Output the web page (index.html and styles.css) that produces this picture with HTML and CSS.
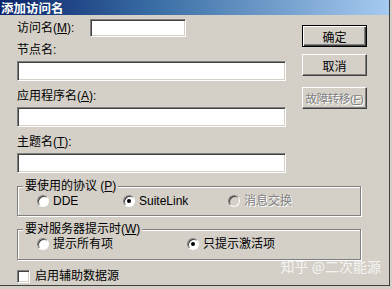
FILE: index.html
```html
<!DOCTYPE html>
<html lang="zh-CN">
<head>
    <meta charset="UTF-8">
    <title>添加访问名</title>
    <link rel="stylesheet" href="styles.css">
</head>
<body>
    <div class="window">
        <!-- Title bar -->
        <div class="titlebar"><span class="title">添加访问名</span></div>

        <div class="dialog">
            <div class="top">
                <!-- Text fields -->
                <div class="fields">
                    <div class="access-row">
                        <span class="access-label">访问名(<u>M</u>):</span>
                        <div class="edit edit-short"></div>
                    </div>
                    <div class="label label-first">节点名:</div>
                    <div class="edit"></div>
                    <div class="label">应用程序名(<u>A</u>):</div>
                    <div class="edit"></div>
                    <div class="label">主题名(<u>T</u>):</div>
                    <div class="edit"></div>
                </div>

                <!-- Buttons -->
                <div class="buttons">
                    <button class="btn btn-default">确定</button>
                    <button class="btn">取消</button>
                    <button class="btn btn-disabled">故障转移(<u>F</u>)</button>
                </div>
            </div>

            <fieldset class="group">
                <legend>要使用的协议 (<u>P</u>)</legend>
                <div class="options">
                    <label class="opt opt-dde"><span class="radio"></span>DDE</label>
                    <label class="opt opt-suite"><span class="radio checked"></span>SuiteLink</label>
                    <label class="opt disabled"><span class="radio"></span>消息交换</label>
                </div>
            </fieldset>

            <fieldset class="group group-second">
                <legend>要对服务器提示时(<u>W</u>)</legend>
                <div class="options">
                    <label class="opt opt-all"><span class="radio"></span>提示所有项</label>
                    <label class="opt"><span class="radio checked"></span>只提示激活项</label>
                </div>
            </fieldset>

            <label class="check-row"><span class="checkbox"></span>启用辅助数据源</label>
        </div>

        <div class="watermark">知乎 @二次能源</div>
    </div>
</body>
</html>
```

FILE: styles.css
```css
/* General Reset */
body, html {
    margin: 0;
    padding: 0;
    background-color: #d4d0c8;
    font-family: 'Liberation Sans', 'Noto Sans CJK SC', sans-serif;
    font-size: 12px;
    color: #000;
}

u {
    text-decoration: underline;
    text-underline-offset: 1px;
}

/* Window frame */
.window {
    position: relative;
    width: 389px;
    height: 285px;
    border-right: 1px solid #404040;
    border-bottom: 1px solid #404040;
    background: #d4d0c8;
}

.titlebar {
    display: flex;
    align-items: center;
    height: 15px;
    padding-left: 1px;
    background: linear-gradient(to right, #0a246a, #3a6ea5 40%, #a6caf0);
}

.title {
    line-height: 12px;
    padding-top: 1px;
    color: #fff;
    font-weight: bold;
    font-size: 12.5px;
    font-family: 'Noto Sans CJK SC', sans-serif;
}

.dialog {
    padding: 4px 0 0 17px;
}

.top {
    display: flex;
}

/* Text fields */
.fields {
    width: 269px;
}

.access-row {
    display: flex;
    align-items: center;
    height: 18px;
}

.access-label {
    width: 73px;
    line-height: 14px;
}

.label {
    margin-top: 8px;
    line-height: 14px;
    height: 14px;
}

.label-first {
    margin-top: 6px;
}

.edit {
    box-sizing: border-box;
    width: 269px;
    height: 20px;
    margin-top: 4px;
    background: #fff;
    border: 1px solid;
    border-color: #808080 #fff #fff #808080;
    box-shadow: inset 1px 1px 0 #404040, inset -1px -1px 0 #d4d0c8;
}

.edit-short {
    width: 96px;
    height: 18px;
    margin-top: 0;
}

/* Buttons */
.buttons {
    display: flex;
    flex-direction: column;
    margin-left: 16px;
    padding-top: 6px;
}

.btn {
    box-sizing: border-box;
    width: 65px;
    height: 22px;
    padding: 0;
    margin-bottom: 7px;
    background: #d4d0c8;
    border: 1px solid;
    border-color: #fff #404040 #404040 #fff;
    box-shadow: inset -1px -1px 0 #808080;
    font-family: 'Liberation Sans', 'Noto Sans CJK SC', sans-serif;
    font-size: 12px;
    white-space: nowrap;
    color: #000;
}

.btn-default {
    border-color: #000;
    box-shadow: inset 1px 1px 0 #fff, inset -1px -1px 0 #404040, inset -2px -2px 0 #808080;
}

.btn + .btn-disabled {
    margin-top: 4px;
}

.btn-disabled {
    font-size: 11.5px;
    letter-spacing: -0.4px;
    color: #808080;
    text-shadow: 1px 1px 0 #fff;
}

/* Group boxes */
.group {
    box-sizing: border-box;
    width: 344px;
    margin: 6px 0 0 0;
    padding: 0 0 6px 19px;
    border: 1px solid #808080;
    box-shadow: 1px 1px 0 #fff, inset 1px 1px 0 #fff;
}

.group legend {
    margin-left: -14px;
    padding: 0 2px;
    line-height: 14px;
    background: #d4d0c8;
}

.group-second {
    padding-bottom: 7px;
}

.options {
    display: flex;
    align-items: center;
    height: 16px;
}

.opt {
    display: flex;
    align-items: center;
    line-height: 14px;
}

.opt-dde { width: 86px; }
.opt-suite { width: 105px; }
.opt-all { width: 150px; }

.opt.disabled {
    color: #808080;
    text-shadow: 1px 1px 0 #fff;
}

.radio {
    position: relative;
    box-sizing: border-box;
    width: 12px;
    height: 12px;
    margin-right: 4px;
    border-radius: 50%;
    background: #fff;
    border: 1px solid;
    border-color: #808080 #fff #fff #808080;
    box-shadow: inset 1px 1px 0 #404040;
}

.opt.disabled .radio {
    background: #d4d0c8;
}

.radio.checked::after {
    content: "";
    position: absolute;
    left: 3px;
    top: 3px;
    width: 4px;
    height: 4px;
    border-radius: 50%;
    background: #000;
}

/* Checkbox */
.check-row {
    display: flex;
    align-items: center;
    margin-top: 9px;
    line-height: 14px;
}

.checkbox {
    box-sizing: border-box;
    width: 13px;
    height: 13px;
    margin-right: 5px;
    background: #fff;
    border: 1px solid;
    border-color: #808080 #fff #fff #808080;
    box-shadow: inset 1px 1px 0 #404040, inset -1px -1px 0 #d4d0c8;
}

/* Watermark over the corner */
.watermark {
    position: absolute;
    right: 8px;
    bottom: 9px;
    font-family: 'Noto Sans CJK SC', sans-serif;
    font-size: 14px;
    color: rgba(255, 255, 255, 0.8);
}
```
